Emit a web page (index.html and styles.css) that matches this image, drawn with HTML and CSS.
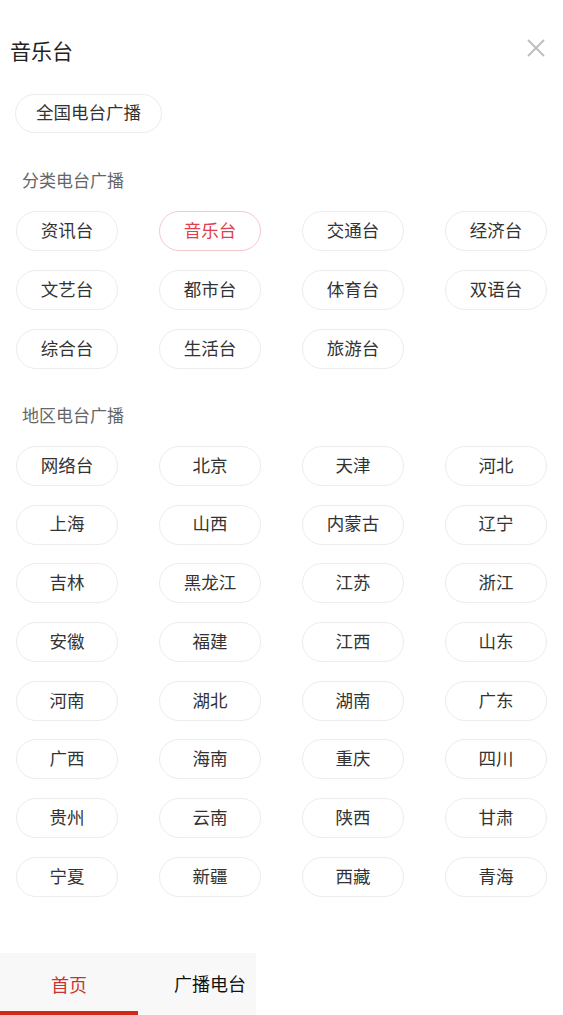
FILE: index.html
```html
<!DOCTYPE html>
<html lang="zh-CN">
<head>
<meta charset="UTF-8" />
<title>音乐台</title>
<meta name="viewport" content="width=device-width, initial-scale=1.0" />
<link rel="stylesheet" href="styles.css">
</head>
<body>
    <div class="page">
        <header class="top">
            <h1>音乐台</h1>
            <span class="close">
                <svg width="20" height="20" viewBox="0 0 20 20"><path d="M2 2L18 18M18 2L2 18" stroke="#bdbdbd" stroke-width="1.8" fill="none" /></svg>
            </span>
        </header>

        <div class="all"><span class="pill pill-wide">全国电台广播</span></div>

        <h2>分类电台广播</h2>
        <div class="grid">
            <span class="pill">资讯台</span>
            <span class="pill active">音乐台</span>
            <span class="pill">交通台</span>
            <span class="pill">经济台</span>
            <span class="pill">文艺台</span>
            <span class="pill">都市台</span>
            <span class="pill">体育台</span>
            <span class="pill">双语台</span>
            <span class="pill">综合台</span>
            <span class="pill">生活台</span>
            <span class="pill">旅游台</span>
        </div>

        <h2 class="region-title">地区电台广播</h2>
        <div class="grid region">
            <span class="pill">网络台</span>
            <span class="pill">北京</span>
            <span class="pill">天津</span>
            <span class="pill">河北</span>
            <span class="pill">上海</span>
            <span class="pill">山西</span>
            <span class="pill">内蒙古</span>
            <span class="pill">辽宁</span>
            <span class="pill">吉林</span>
            <span class="pill">黑龙江</span>
            <span class="pill">江苏</span>
            <span class="pill">浙江</span>
            <span class="pill">安徽</span>
            <span class="pill">福建</span>
            <span class="pill">江西</span>
            <span class="pill">山东</span>
            <span class="pill">河南</span>
            <span class="pill">湖北</span>
            <span class="pill">湖南</span>
            <span class="pill">广东</span>
            <span class="pill">广西</span>
            <span class="pill">海南</span>
            <span class="pill">重庆</span>
            <span class="pill">四川</span>
            <span class="pill">贵州</span>
            <span class="pill">云南</span>
            <span class="pill">陕西</span>
            <span class="pill">甘肃</span>
            <span class="pill">宁夏</span>
            <span class="pill">新疆</span>
            <span class="pill">西藏</span>
            <span class="pill">青海</span>
        </div>

        <nav class="tabs">
            <span class="tab current">首页</span>
            <span class="tab tab-radio">广播电台</span>
        </nav>
    </div>
</body>
</html>
```

FILE: styles.css
```css
* {
    margin:0px;
    padding:0px;
    box-sizing:border-box;
}

body {
    font-family:'Noto Sans CJK SC', 'Noto Sans', sans-serif;
    color:#333;
    background-color:#fff;
}

.page {
    display:flex;
    flex-direction:column;
    min-height:100vh;
}

.top {
    display:flex;
    justify-content:space-between;
    align-items:center;
    padding:35px 17px 0px 10px;
    height:65px;
}

.top h1 {
    font-size:21px;
    font-weight:normal;
    line-height:30px;
    color:#222;
}

.close {
    display:flex;
    margin-top:-4px;
}

.all {
    margin-top:29px;
    padding-left:15px;
}

.pill {
    display:flex;
    justify-content:center;
    align-items:center;
    height:40px;
    padding-bottom:3px;
    border:1px solid #ececec;
    border-radius:20px;
    font-size:17.5px;
    line-height:1;
    color:#333;
    background-color:#fff;
}

.pill-wide {
    display:inline-flex;
    width:147px;
    height:39px;
}

.pill.active {
    border-color:#f4c8cb;
    color:#e2404d;
}

h2 {
    margin-top:35px;
    padding-left:22px;
    font-size:17px;
    font-weight:normal;
    line-height:24px;
    color:#666;
}

.region-title {
    margin-top:34px;
}

.grid {
    display:grid;
    grid-template-columns:repeat(4, 102px);
    column-gap:41px;
    row-gap:19px;
    margin-top:19px;
    padding-left:16px;
}

.grid.region {
    row-gap:18.7px;
}

.tabs {
    display:flex;
    margin-top:auto;
    width:256px;
    height:62px;
    background-color:#f8f8f8;
}

.tab {
    flex:0 0 138px;
    display:flex;
    justify-content:center;
    align-items:center;
    padding-bottom:2px;
    font-size:18px;
    color:#111;
}

.tab-radio {
    flex-basis:144px;
}

.tab.current {
    color:#c9352c;
    border-bottom:4px solid #d2281a;
    padding-top:4px;
    padding-bottom:0px;
}
```
